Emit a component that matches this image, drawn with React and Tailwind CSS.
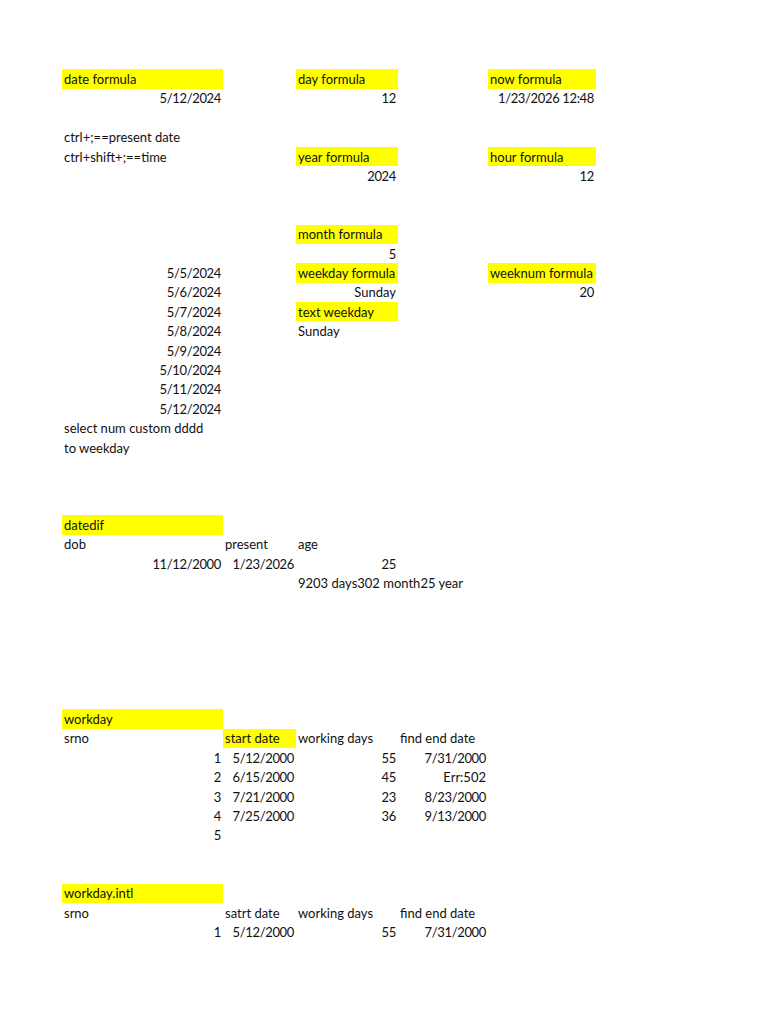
// cell: [text, align('l'|'r'), yellow]
const rows = [
  [["date formula", "l", 1], null, ["day formula", "l", 1], null, ["now formula", "l", 1]],
  [["5/12/2024", "r"], null, ["12", "r"], null, ["1/23/2026 12:48", "r"]],
  [],
  [["ctrl+;==present date", "l"]],
  [["ctrl+shift+;==time", "l"], null, ["year formula", "l", 1], null, ["hour formula", "l", 1]],
  [null, null, ["2024", "r"], null, ["12", "r"]],
  [],
  [],
  [null, null, ["month formula", "l", 1]],
  [null, null, ["5", "r"]],
  [["5/5/2024", "r"], null, ["weekday formula", "l", 1], null, ["weeknum formula", "l", 1]],
  [["5/6/2024", "r"], null, ["Sunday", "r"], null, ["20", "r"]],
  [["5/7/2024", "r"], null, ["text weekday", "l", 1]],
  [["5/8/2024", "r"], null, ["Sunday", "l"]],
  [["5/9/2024", "r"]],
  [["5/10/2024", "r"]],
  [["5/11/2024", "r"]],
  [["5/12/2024", "r"]],
  [["select num custom dddd", "l"]],
  [["to weekday", "l"]],
  [],
  [],
  [],
  [["datedif", "l", 1]],
  [["dob", "l"], ["present", "l"], ["age", "l"]],
  [["11/12/2000", "r"], ["1/23/2026", "r"], ["25", "r"]],
  [null, null, ["9203 days302 month25 year", "l"]],
  [],
  [],
  [],
  [],
  [],
  [],
  [["workday", "l", 1]],
  [["srno", "l"], ["start date", "l", 1], ["working days", "l"], ["find end date", "l"]],
  [["1", "r"], ["5/12/2000", "r"], ["55", "r"], ["7/31/2000", "r"]],
  [["2", "r"], ["6/15/2000", "r"], ["45", "r"], ["Err:502", "r"]],
  [["3", "r"], ["7/21/2000", "r"], ["23", "r"], ["8/23/2000", "r"]],
  [["4", "r"], ["7/25/2000", "r"], ["36", "r"], ["9/13/2000", "r"]],
  [["5", "r"]],
  [],
  [],
  [["workday.intl", "l", 1]],
  [["srno", "l"], ["satrt date", "l"], ["working days", "l"], ["find end date", "l"]],
  [["1", "r"], ["5/12/2000", "r"], ["55", "r"], ["7/31/2000", "r"]],
];

function Cell({ c }) {
  if (!c) return <div className="h-[19.4px]" />;
  const [text, align, yellow] = c;
  const numeric = /^[0-9]/.test(text) && align === "r";
  return (
    <div
      className={
        "h-[19.4px] flex items-center px-[2px] whitespace-nowrap overflow-visible " +
        (align === "r" ? "justify-end " : "justify-start ") +
        (yellow ? "bg-[#ffff00]" : "")
      }
    >
      <span className={"leading-none pt-[1px] " + (numeric ? "tracking-[-0.35px]" : "")}>{text}</span>
    </div>
  );
}

export default function App() {
  return (
    <div
      className="w-[768px] h-[1024px] bg-white text-[#111] overflow-hidden pt-[69.4px] pl-[62px] text-[13px]"
      style={{ fontFamily: "Lato, 'Open Sans', sans-serif" }}
    >
      <div className="grid grid-cols-[161px_73px_102px_90px_108px]">
        {rows.map((r, i) =>
          [0, 1, 2, 3, 4].map((j) => <Cell key={i + "-" + j} c={r[j]} />)
        )}
      </div>
    </div>
  );
}
